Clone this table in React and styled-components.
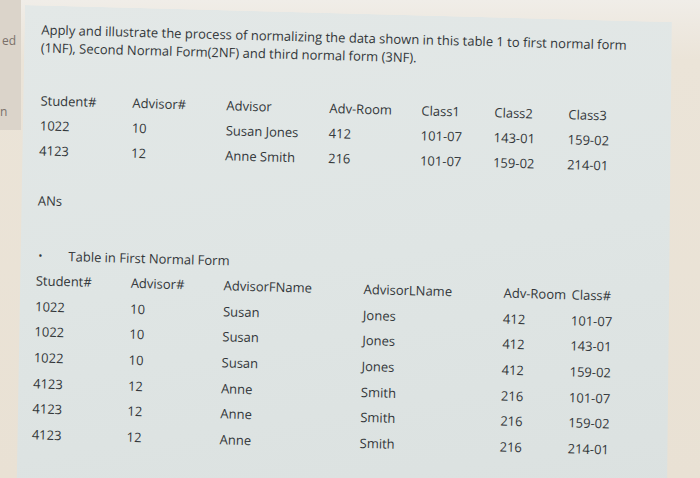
import React from 'react';
import styled, { createGlobalStyle } from 'styled-components';

const GlobalStyle = createGlobalStyle`
  html, body {
    margin: 0;
    padding: 0;
    background: #ebe4d9;
    overflow: hidden;
  }
`;

const Page = styled.div`
  display: flex;
  align-items: flex-start;
  width: 700px;
  height: 478px;
  overflow: hidden;
  background: linear-gradient(180deg, #f0ede8 0px, #eee9e1 24px, #ebe4d8 60px, #e9e1d4 100%);
  font-family: "Open Sans", "Liberation Sans", sans-serif;
  color: #33373a;
`;

const SideTab = styled.div`
  flex: 0 0 21px;
  height: 130px;
  background: #dbd4ca;
  color: #7a716a;
  font-size: 12px;
  display: flex;
  flex-direction: column;
  padding-top: 33px;
  box-sizing: border-box;
  gap: 55px;
  overflow: hidden;
`;

const TabText = styled.span`
  margin-left: ${p => p.$shift}px;
  line-height: 16px;
`;

// photographed screen: the panel is tilted and slightly keystoned
const Panel = styled.div`
  flex: 0 0 656px;
  height: 560px;
  margin: 5px 0 0 4px;
  transform-origin: 0 0;
  transform: rotate(1.5deg);
  clip-path: polygon(0 0, 647px 0, 656px 560px, 5px 560px);
  background: linear-gradient(170deg, #e3e8e7 0%, #dfe5e4 45%, #dae0df 100%);
  box-sizing: border-box;
  padding: 15px 0 0 18px;
`;

const Question = styled.p`
  margin: 0 0 0 -1px;
  font-size: 13px;
  line-height: 18px;
  white-space: nowrap;
`;

const Grid = styled.div`
  display: grid;
  grid-template-columns: ${p => p.$cols};
  grid-auto-rows: ${p => p.$row}px;
  align-items: center;
  margin-top: ${p => p.$top}px;
  font-size: 13px;
`;

const Cell = styled.span`
  white-space: nowrap;
`;

const Label = styled.div`
  font-size: 13px;
  line-height: 25px;
  margin-top: ${p => p.$top}px;
`;

const BulletRow = styled.div`
  display: flex;
  align-items: center;
  height: 25px;
  margin-top: 29px;
  font-size: 13px;
`;

const Bullet = styled.span`
  width: 30px;
  padding-left: 2px;
  font-size: 11px;
`;

const table1Head = ['Student#', 'Advisor#', 'Advisor', 'Adv-Room', 'Class1', 'Class2', 'Class3'];
const table1Rows = [
  ['1022', '10', 'Susan Jones', '412', '101-07', '143-01', '159-02'],
  ['4123', '12', 'Anne Smith', '216', '101-07', '159-02', '214-01'],
];

const table2Head = ['Student#', 'Advisor#', 'AdvisorFName', 'AdvisorLName', 'Adv-Room', 'Class#'];
const table2Rows = [
  ['1022', '10', 'Susan', 'Jones', '412', '101-07'],
  ['1022', '10', 'Susan', 'Jones', '412', '143-01'],
  ['1022', '10', 'Susan', 'Jones', '412', '159-02'],
  ['4123', '12', 'Anne', 'Smith', '216', '101-07'],
  ['4123', '12', 'Anne', 'Smith', '216', '159-02'],
  ['4123', '12', 'Anne', 'Smith', '216', '214-01'],
];

export default function App() {
  return (
    <Page>
      <GlobalStyle />
      <SideTab>
        <TabText $shift={2}>ed</TabText>
        <TabText $shift={0}>n</TabText>
      </SideTab>
      <Panel>
        <Question>
          Apply and illustrate the process of normalizing the data shown in this table 1 to first normal form
          <br />
          (1NF), Second Normal Form(2NF) and third normal form (3NF).
        </Question>

        <Grid $cols="92px 94px 103px 92px 73px 74px auto" $row={25} $top={31}>
          {table1Head.map(h => <Cell key={h}>{h}</Cell>)}
          {table1Rows.map((r, i) => r.map((c, j) => <Cell key={i + '-' + j}>{c}</Cell>))}
        </Grid>

        <Label $top={26}>ANs</Label>

        <BulletRow>
          <Bullet>•</Bullet>
          <span>Table in First Normal Form</span>
        </BulletRow>

        <Grid $cols="95px 93px 140px 140px 68px auto" $row={25.7} $top={0}>
          {table2Head.map(h => <Cell key={h}>{h}</Cell>)}
          {table2Rows.map((r, i) => r.map((c, j) => <Cell key={i + '-' + j}>{c}</Cell>))}
        </Grid>
      </Panel>
    </Page>
  );
}
